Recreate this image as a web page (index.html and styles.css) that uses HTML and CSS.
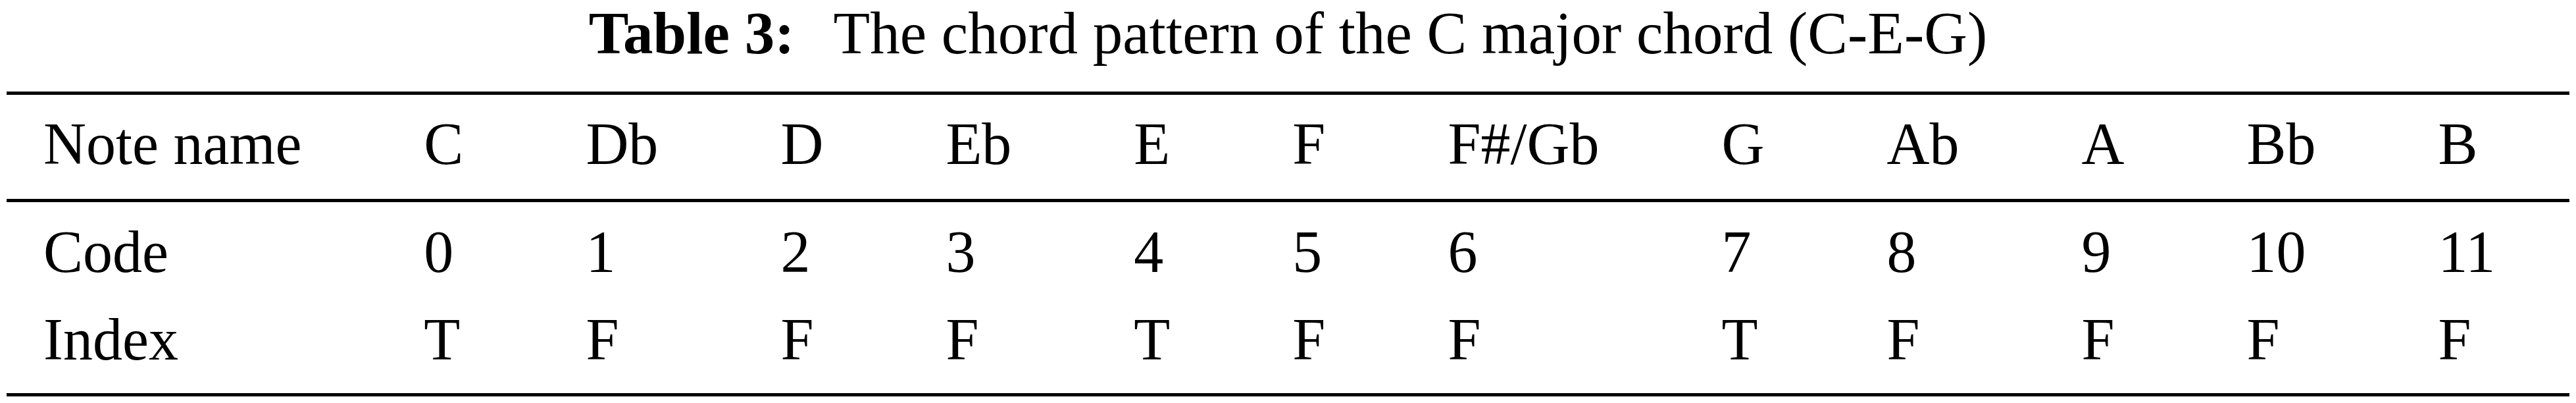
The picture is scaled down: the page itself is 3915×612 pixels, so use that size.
FILE: index.html
```html
<!DOCTYPE html>
<html lang="en">
<head>
<meta charset="utf-8">
<title>Table 3</title>
<link rel="stylesheet" href="styles.css">
</head>
<body>
<div class="caption"><span class="label">Table 3:</span> The chord pattern of the C major chord (C-E-G)</div>
<div class="tbl">
  <div class="c first head">Note name</div>
  <div class="c head">C</div>
  <div class="c head">Db</div>
  <div class="c head">D</div>
  <div class="c head">Eb</div>
  <div class="c head">E</div>
  <div class="c head">F</div>
  <div class="c head">F#/Gb</div>
  <div class="c head">G</div>
  <div class="c head">Ab</div>
  <div class="c head">A</div>
  <div class="c head">Bb</div>
  <div class="c head">B</div>
  <div class="midrule"></div>
  <div class="c first code">Code</div>
  <div class="c code">0</div>
  <div class="c code">1</div>
  <div class="c code">2</div>
  <div class="c code">3</div>
  <div class="c code">4</div>
  <div class="c code">5</div>
  <div class="c code">6</div>
  <div class="c code">7</div>
  <div class="c code">8</div>
  <div class="c code">9</div>
  <div class="c code">10</div>
  <div class="c code">11</div>
  <div class="c first index">Index</div>
  <div class="c index">T</div>
  <div class="c index">F</div>
  <div class="c index">F</div>
  <div class="c index">F</div>
  <div class="c index">T</div>
  <div class="c index">F</div>
  <div class="c index">F</div>
  <div class="c index">T</div>
  <div class="c index">F</div>
  <div class="c index">F</div>
  <div class="c index">F</div>
  <div class="c index">F</div>
</div>
</body>
</html>
```
FILE: styles.css
```css
html, body {
  margin: 0;
  padding: 0;
  background: #fff;
}
body {
  width: 3915px;
  height: 612px;
  overflow: hidden;
  font-family: "Liberation Serif", "Times New Roman", serif;
  font-size: 90px;
  color: #000;
}
.caption {
  font-size: 91px;
  text-align: center;
  line-height: 102px;
  height: 102px;
  margin-bottom: 37px;
  white-space: nowrap;
}
.label {
  font-weight: bold;
  margin-right: 38px;
}
.tbl {
  margin: 0 10px;
  display: grid;
  grid-template-columns: repeat(12, max-content) 1fr;
  column-gap: 186px;
  border-top: 5px solid #000;
  border-bottom: 5px solid #000;
}
.c {
  line-height: 100px;
  white-space: nowrap;
}
.first {
  padding-left: 56px;
}
.head {
  padding-top: 25px;
  padding-bottom: 33px;
}
.midrule {
  grid-column: 1 / -1;
  height: 5px;
  background: #000;
}
.code {
  padding-top: 26px;
}
.index {
  padding-top: 33px;
  padding-bottom: 31px;
}
```
